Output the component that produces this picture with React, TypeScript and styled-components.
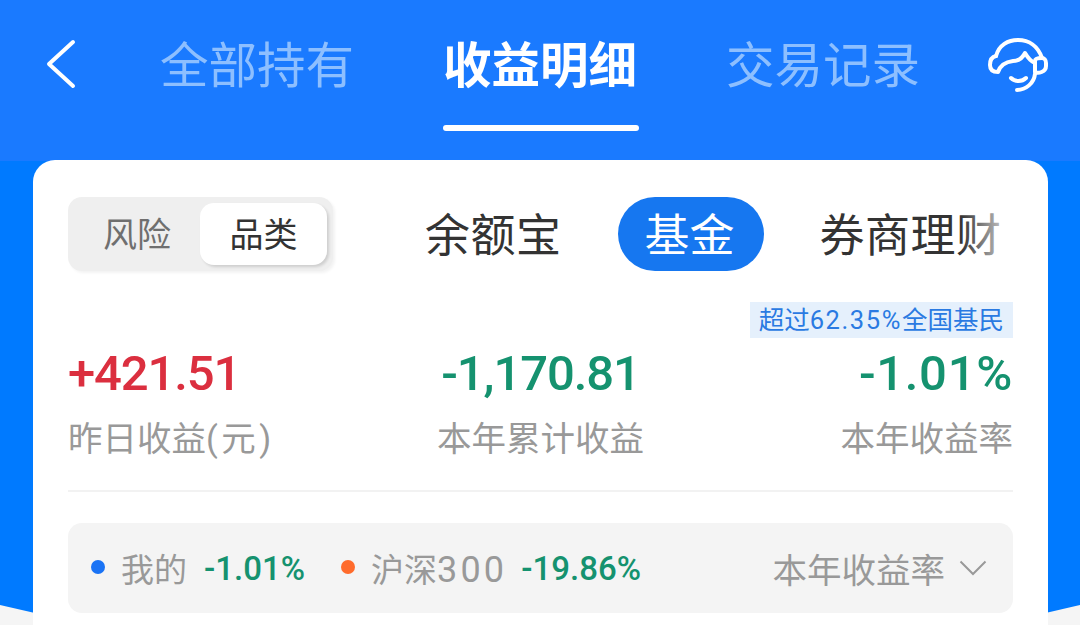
import React from "react";
import styled, { createGlobalStyle } from "styled-components";

const GlobalStyle = createGlobalStyle`
  html, body {
    margin: 0;
    padding: 0;
    background: #f5f5f5;
  }
  * {
    box-sizing: border-box;
  }
`;

const Page = styled.div`
  position: relative;
  width: 1080px;
  height: 625px;
  overflow: hidden;
  background: #f5f5f5;
  font-family: Roboto, "Noto Sans CJK SC", sans-serif;
`;

// 헤더 아래로 이어지는 파란 곡선 배경
const Backdrop = styled.div`
  position: absolute;
  left: -1774px;
  top: -3959px;
  width: 4628px;
  height: 4628px;
  border-radius: 50%;
  background: #007aff;
`;

const Header = styled.div`
  position: relative;
  height: 161px;
  background: #1a7aff;
  display: flex;
  align-items: flex-start;
  padding: 39px 32px 0 46px;
`;

const BackButton = styled.svg`
  width: 30px;
  height: 50px;
  flex: none;
`;

const Tabs = styled.div`
  display: flex;
  margin-left: 84px;
  gap: 91px;
`;

const Tab = styled.div<{ $active?: boolean }>`
  position: relative;
  width: 192px;
  height: 54px;
  line-height: 56px;
  font-size: 48.5px;
  white-space: nowrap;
  font-weight: ${(p) => (p.$active ? 700 : 400)};
  color: ${(p) => (p.$active ? "#ffffff" : "#8dbfff")};
`;

const TabLine = styled.div`
  position: absolute;
  left: 0;
  top: 86px;
  width: 196px;
  height: 6px;
  border-radius: 3px;
  background: #fff;
`;

const ServiceIcon = styled.svg`
  width: 60px;
  height: 56px;
  flex: none;
  margin: -1px 0 0 auto;
`;

const Card = styled.div`
  position: relative;
  width: 1015px;
  height: 480px;
  margin: -1px 0 0 33px;
  padding: 37px 35px 0;
  background: #fff;
  border-radius: 22px 22px 0 0;
`;

const TopRow = styled.div`
  display: flex;
  align-items: center;
  height: 74px;
`;

const Segment = styled.div`
  display: flex;
  align-items: center;
  width: 265px;
  height: 74px;
  padding: 6px;
  border-radius: 14px;
  background: #efefef;
  box-shadow: 2px 2px 3px rgba(0, 0, 0, 0.05);
`;

const SegmentItem = styled.div<{ $active?: boolean }>`
  height: 62px;
  line-height: 64px;
  text-align: center;
  font-size: 34px;
  width: ${(p) => (p.$active ? "127px" : "126px")};
  color: ${(p) => (p.$active ? "#333" : "#6f6f6f")};
  background: ${(p) => (p.$active ? "#fff" : "transparent")};
  border-radius: 14px;
  box-shadow: ${(p) => (p.$active ? "2px 2px 3px rgba(0, 0, 0, 0.14)" : "none")};
`;

const Products = styled.div`
  position: relative;
  display: flex;
  align-items: center;
  margin-left: 92px;
  flex: 1;
  white-space: nowrap;
  overflow: hidden;
  height: 74px;
`;

const Product = styled.div<{ $active?: boolean }>`
  font-size: 45px;
  height: 74px;
  line-height: 79px;
  letter-spacing: ${(p) => (p.$active ? "0" : "0.5px")};
  color: ${(p) => (p.$active ? "#fff" : "#333")};
  background: ${(p) => (p.$active ? "#1677f0" : "transparent")};
  border-radius: 37px;
  padding: ${(p) => (p.$active ? "0 29px 0 27px" : "0")};
  margin-right: 56px;
`;

const ProductFade = styled.div`
  position: absolute;
  right: 0;
  top: 0;
  bottom: 0;
  width: 52px;
  background: linear-gradient(to right, rgba(255, 255, 255, 0), rgba(255, 255, 255, 0.88));
`;

const Stats = styled.div`
  position: relative;
  display: grid;
  grid-template-columns: 1fr 1fr 1fr;
  height: 221px;
  padding-top: 74px;
  border-bottom: 2px solid #f2f2f2;
`;

const Badge = styled.div`
  position: absolute;
  right: 0;
  top: 31px;
  height: 36px;
  line-height: 36px;
  padding: 0 9px;
  font-size: 25.5px;
  color: #2a7ae2;
  background: #e5f0fc;
  white-space: nowrap;
`;

const Digits = styled.span<{ $gap: number; $size?: number }>`
  letter-spacing: ${(p) => p.$gap}px;
  font-size: ${(p) => (p.$size ? `${p.$size}px` : "inherit")};
`;

const Stat = styled.div<{ $align: string }>`
  display: flex;
  flex-direction: column;
  align-items: ${(p) => p.$align};
`;

const Value = styled.div<{ $up?: boolean }>`
  height: 58px;
  line-height: 58px;
  font-size: 49px;
  font-weight: 500;
  letter-spacing: -1.1px;
  color: ${(p) => (p.$up ? "#db2f3f" : "#15926f")};
`;

const Label = styled.div`
  height: 46px;
  line-height: 46px;
  margin-top: 13px;
  font-size: 34.5px;
  color: #999;
  white-space: nowrap;
`;

const Compare = styled.div`
  display: flex;
  align-items: center;
  height: 90px;
  margin-top: 31px;
  padding: 0 26px 0 23px;
  border-radius: 14px;
  background: #f4f4f4;
  white-space: nowrap;
`;

const Dot = styled.span<{ $color: string }>`
  flex: none;
  width: 14px;
  height: 14px;
  border-radius: 50%;
  margin-top: -2px;
  background: ${(p) => p.$color};
`;

const Series = styled.span`
  margin-left: 16px;
  font-size: 33px;
  color: #999;
`;

const Rate = styled.span<{ $left: number }>`
  margin-left: ${(p) => p.$left}px;
  margin-right: 36px;
  font-size: 33px;
  font-weight: 500;
  color: #15926f;
`;

const Metric = styled.div`
  display: flex;
  align-items: center;
  gap: 14px;
  margin-left: auto;
  font-size: 34.5px;
  color: #999;
`;

const Chevron = styled.svg`
  width: 28px;
  height: 16px;
`;

export default function App() {
  return (
    <Page>
      <GlobalStyle />
      <Backdrop />
      <Header>
        <BackButton viewBox="0 0 30 50">
          <path d="M27 3 L3 25 L27 47" fill="none" stroke="#fff" strokeWidth="4" strokeLinecap="round" strokeLinejoin="round" />
        </BackButton>
        <Tabs>
          <Tab>全部持有</Tab>
          <Tab $active>
            收益明细
            <TabLine />
          </Tab>
          <Tab>交易记录</Tab>
        </Tabs>
        <ServiceIcon viewBox="8 8 60 56" fill="none" stroke="#fff" strokeWidth="4" strokeLinecap="round" strokeLinejoin="round">
          <path d="M16 26 C19 15 28 10 38 10 C49 10 58 16 62 28" />
          <path d="M16 26 C11 27 10 31 10 35 C10 40 13 42 18 42 C20 36 25 32 33 31 C39 31 43 27 45 23 C48 28 52 32 55 33" />
          <path d="M55 31 V42 C58 44 66 42 66 36 V33 C66 30 64 28 62 28 C59 28 55 28 55 31" />
          <path d="M55 44 C54 53 46 60 37 60" />
          <path d="M31 48 C35 52 42 52 46 48" />
        </ServiceIcon>
      </Header>
      <Card>
        <TopRow>
          <Segment>
            <SegmentItem>风险</SegmentItem>
            <SegmentItem $active>品类</SegmentItem>
          </Segment>
          <Products>
            <Product>余额宝</Product>
            <Product $active>基金</Product>
            <Product>券商理财</Product>
            <ProductFade />
          </Products>
        </TopRow>
        <Stats>
          <Badge>
            超过<Digits $gap={1.6}>62.35%</Digits>全国基民
          </Badge>
          <Stat $align="flex-start">
            <Value $up>+421.51</Value>
            <Label>
              昨日收益<Digits $gap={3.5}>(元)</Digits>
            </Label>
          </Stat>
          <Stat $align="center">
            <Value>-1,170.81</Value>
            <Label>本年累计收益</Label>
          </Stat>
          <Stat $align="flex-end">
            <Value>
              <Digits $gap={0.7}>-1.01%</Digits>
            </Value>
            <Label>本年收益率</Label>
          </Stat>
        </Stats>
        <Compare>
          <Dot $color="#1a73f5" />
          <Series>我的</Series>
          <Rate $left={17}>-1.01%</Rate>
          <Dot $color="#ff6b2c" />
          <Series>
            沪深<Digits $gap={3.2} $size={36}>300</Digits>
          </Series>
          <Rate $left={14}>-19.86%</Rate>
          <Metric>
            本年收益率
            <Chevron viewBox="0 0 28 16">
              <path d="M1.5 1.5 L14 14 L26.5 1.5" fill="none" stroke="#999" strokeWidth="2" />
            </Chevron>
          </Metric>
        </Compare>
      </Card>
    </Page>
  );
}
